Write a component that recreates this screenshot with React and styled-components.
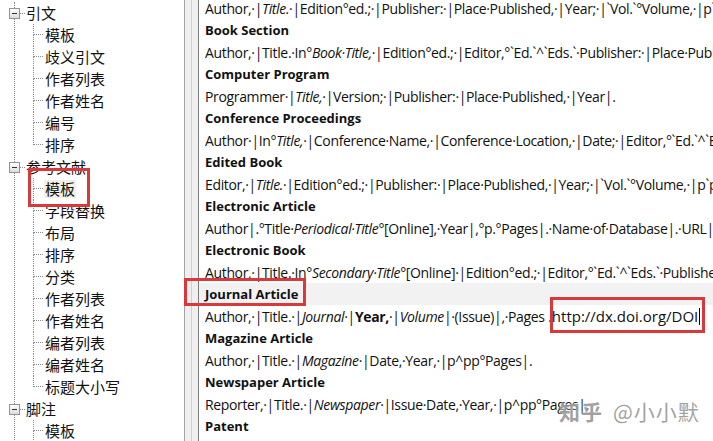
import React from "react";
import styled, { createGlobalStyle } from "styled-components";

const Global = createGlobalStyle`
  html, body {
    margin: 0;
    padding: 0;
    background: #ffffff;
  }
  body {
    font-family: "Open Sans", "Noto Sans CJK SC", sans-serif;
  }
`;

const Window = styled.div`
  position: relative;
  display: flex;
  width: 713px;
  height: 441px;
  overflow: hidden;
  background: #ffffff;
`;

const TreePane = styled.div`
  width: 185px;
  flex: none;
  border-right: 1px solid #a3a3a3;
  overflow: hidden;
  padding-top: 2px;
  box-sizing: border-box;
`;

const TreeRoot = styled.div`
  margin-left: 14px;
  border-left: 1px dotted #8a8a8a;
  min-height: 100%;
`;

const ParentRow = styled.div`
  display: flex;
  align-items: center;
  height: 22px;
  margin-left: -6px;
`;

const ExpandBox = styled.span`
  width: 9px;
  height: 9px;
  flex: none;
  border: 1px solid #949494;
  background: linear-gradient(#ffffff, #dcdcdc);
  display: flex;
  align-items: center;
  justify-content: center;

  &::after {
    content: "";
    width: 5px;
    height: 1px;
    background: #333333;
  }
`;

const Stub = styled.span`
  width: 5px;
  flex: none;
  border-top: 1px dotted #8a8a8a;
`;

const Label = styled.span`
  font-family: "Noto Sans CJK SC", sans-serif;
  font-size: 15px;
  line-height: 18px;
  color: #111111;
  padding: 0 1px;
  background: ${(p) => (p.$selected ? "#f4efe6" : "transparent")};
`;

const ChildRow = styled.div`
  display: flex;
  height: 22px;
  padding-left: 18px;
`;

const Elbow = styled.span`
  width: 10px;
  flex: none;
  display: flex;
  flex-direction: column;
`;

const ElbowTop = styled.span`
  height: 11px;
  border-left: 1px dotted #8a8a8a;
  border-bottom: 1px dotted #8a8a8a;
  box-sizing: border-box;
`;

const ElbowBottom = styled.span`
  flex: 1;
  border-left: 1px dotted ${(p) => (p.$last ? "transparent" : "#8a8a8a")};
`;

const ChildLabel = styled(Label)`
  align-self: center;
  margin-left: 1px;
`;

const Splitter = styled.div`
  width: 13px;
  flex: none;
  background: #efefef;
  display: flex;
  justify-content: center;

  &::before {
    content: "";
    width: 1px;
    background: #cfcfcf;
  }
`;

const StylePane = styled.div`
  flex: 1;
  min-width: 0;
  border-left: 1px solid #7c7c7c;
  overflow: hidden;
`;

const Entries = styled.div`
  margin-top: -3px;
`;

const Heading = styled.div`
  height: 22px;
  display: flex;
  align-items: center;
  padding-left: 6px;
  font-family: "Open Sans", sans-serif;
  font-weight: 700;
  font-size: 13px;
  color: #111111;
  white-space: nowrap;
  background: ${(p) => (p.$active ? "#f2f2f2" : "transparent")};
`;

const Body = styled.div`
  height: 22px;
  display: flex;
  align-items: center;
  padding-left: 6px;
  font-family: "Open Sans", sans-serif;
  font-size: 14px;
  letter-spacing: -0.35px;
  color: #111111;
  white-space: pre;
`;

const It = styled.i`
  font-style: italic;
`;

const Bd = styled.b`
  font-weight: 700;
`;

const Link = styled.span`
  font-size: 15px;
  letter-spacing: 0;
`;

const Caret = styled.span`
  display: inline-block;
  width: 1px;
  height: 17px;
  margin-left: 1px;
  background: #000000;
`;

const Highlight = styled.div`
  position: absolute;
  border: 3px solid #d8393b;
  box-sizing: border-box;
  pointer-events: none;
`;

const Watermark = styled.div`
  position: absolute;
  left: 559px;
  top: 396px;
  font-family: "Noto Sans CJK SC", sans-serif;
  font-size: 21px;
  letter-spacing: 1px;
  color: rgba(130, 130, 130, 0.75);
  text-shadow: 0 0 2px #ffffff;
  white-space: nowrap;

  strong {
    font-weight: 700;
    margin-right: 10px;
  }
`;

const tree = [
  { title: "引文", items: ["模板", "歧义引文", "作者列表", "作者姓名", "编号", "排序"] },
  {
    title: "参考文献",
    items: ["模板", "字段替换", "布局", "排序", "分类", "作者列表", "作者姓名", "编者列表", "编者姓名", "标题大小写"],
    selected: 0,
  },
  { title: "脚注", items: ["模板", "字段替换", "布局"] },
];

const entries = [
  {
    body: ["Author,·|", { i: "Title." }, "·|Edition°ed.;·|Publisher:·|Place·Published,·|Year;·|`Vol.`°Volume,·|p`p.`°Pages|."],
  },
  {
    title: "Book Section",
    body: ["Author,·|Title.·In°", { i: "Book·Title," }, "·|Edition°ed.;·|Editor,°`Ed.`^`Eds.`·Publisher:·|Place·Published,·|Year."],
  },
  {
    title: "Computer Program",
    body: ["Programmer·|", { i: "Title," }, "·|Version;·|Publisher:·|Place·Published,·|Year|."],
  },
  {
    title: "Conference Proceedings",
    body: ["Author·|In°", { i: "Title," }, "·|Conference·Name,·|Conference·Location,·|Date;·|Editor,°`Ed.`^`Eds.`"],
  },
  {
    title: "Edited Book",
    body: ["Editor,·|", { i: "Title." }, "·|Edition°ed.;·|Publisher:·|Place·Published,·|Year;·|`Vol.`°Volume,·|p`p.`"],
  },
  {
    title: "Electronic Article",
    body: ["Author|.°Title·", { i: "Periodical·Title" }, "°[Online],·Year|,°p.°Pages|.·Name·of·Database|.·URL|."],
  },
  {
    title: "Electronic Book",
    body: ["Author,·|Title.·In°", { i: "Secondary·Title" }, "°[Online]·|Edition°ed.;·|Editor,°`Ed.`^`Eds.`·Publisher"],
  },
  {
    title: "Journal Article",
    active: true,
    body: ["Author,·|Title.·|", { i: "Journal" }, "·|", { b: "Year," }, "·|", { i: "Volume" }, "|·(Issue)|,·Pages ", { link: ".http://dx.doi.org/DOI" }, { caret: true }],
  },
  {
    title: "Magazine Article",
    body: ["Author,·|Title.·|", { i: "Magazine" }, "·|Date,·Year,·|p^pp°Pages|."],
  },
  {
    title: "Newspaper Article",
    body: ["Reporter,·|Title.·|", { i: "Newspaper" }, "·|Issue·Date,·Year,·|p^pp°Pages|."],
  },
  {
    title: "Patent",
    body: ["Inventor.·|", { i: "Title" }, "·|Patent·Number.·|Date."],
  },
];

function renderPart(part, idx) {
  if (typeof part === "string") return <React.Fragment key={idx}>{part}</React.Fragment>;
  if (part.caret) return <Caret key={idx} />;
  if (part.link) return <Link key={idx}>{part.link}</Link>;
  if (part.b) return <Bd key={idx}>{part.b}</Bd>;
  return <It key={idx}>{part.i}</It>;
}

function TreeGroup({ title, items, selected }) {
  return (
    <div>
      <ParentRow>
        <ExpandBox />
        <Stub />
        <Label>{title}</Label>
      </ParentRow>
      {items.map((item, i) => (
        <ChildRow key={item + i}>
          <Elbow>
            <ElbowTop />
            <ElbowBottom $last={i === items.length - 1} />
          </Elbow>
          <ChildLabel $selected={selected === i}>{item}</ChildLabel>
        </ChildRow>
      ))}
    </div>
  );
}

export default function App() {
  return (
    <>
      <Global />
      <Window>
        <TreePane>
          <TreeRoot>
            {tree.map((g) => (
              <TreeGroup key={g.title} {...g} />
            ))}
          </TreeRoot>
        </TreePane>
        <Splitter />
        <StylePane>
          <Entries>
            {entries.map((e, i) => (
              <React.Fragment key={i}>
                {e.title && <Heading $active={e.active}>{e.title}</Heading>}
                <Body>{e.body.map(renderPart)}</Body>
              </React.Fragment>
            ))}
          </Entries>
        </StylePane>

        <Highlight style={{ left: 28, top: 168, width: 62, height: 39 }} />
        <Highlight style={{ left: 184, top: 278, width: 122, height: 28 }} />
        <Highlight style={{ left: 550, top: 297, width: 155, height: 36 }} />

        <Watermark>
          <strong>知乎</strong>@小小默
        </Watermark>
      </Window>
    </>
  );
}
